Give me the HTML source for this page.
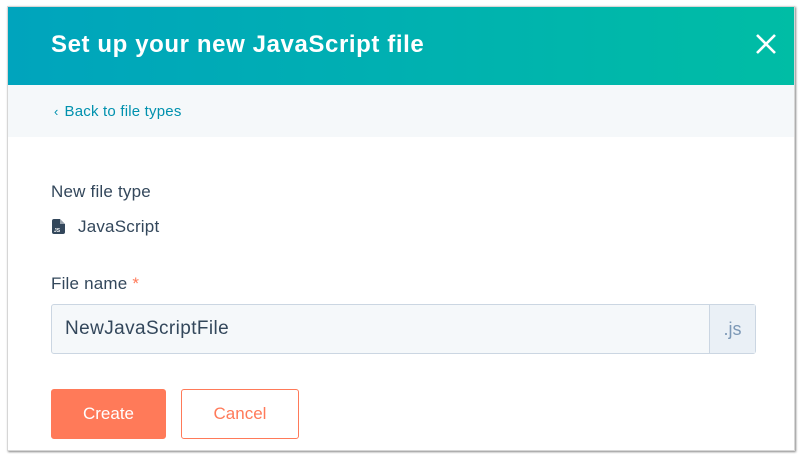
<!DOCTYPE html>
<html><head><style>
*{margin:0;padding:0;box-sizing:border-box}
body{width:802px;height:454px;background:#fff;font-family:"Liberation Sans",sans-serif;position:relative;overflow:hidden}
.modal{position:absolute;left:7px;top:6px;width:788px;height:445px;border:1px solid #d6d6d6;box-shadow:1px 1px 2px #888;background:#fff}
.hdr{position:absolute;left:8px;top:7px;width:786px;height:78px;background:linear-gradient(90deg,#00a4bd,#00bda5)}
.hdr h1{position:absolute;left:43px;top:24px;color:#fff;font-size:24px;font-weight:bold;letter-spacing:0.6px}
.back{position:absolute;left:8px;top:85px;width:786px;height:52px;background:#f5f8fa}
.back span{position:absolute;left:46px;top:18px;color:#0091ae;font-size:15px;letter-spacing:0.2px}
.t{position:absolute;color:#33475b;font-size:17px;letter-spacing:0.2px}
.inp{position:absolute;left:51px;top:304px;width:705px;height:50px;border:1px solid #cbd6e2;border-radius:3px;background:#f5f8fa}
.inp .v{position:absolute;left:13px;top:13px;font-size:19px;color:#33475b;letter-spacing:0.4px}
.add{position:absolute;right:0;top:0;width:46px;height:48px;border-left:1px solid #cbd6e2;background:#eaf0f6;color:#7c98b6;font-size:18px;text-align:center;line-height:48px}
.btn{position:absolute;top:389px;height:50px;border-radius:3px;font-size:17px;text-align:center;line-height:48px}
</style></head><body>
<div class="modal"></div>
<div class="hdr"><h1>Set up your new JavaScript file</h1>
<svg style="position:absolute;left:747px;top:26px" width="22" height="22" viewBox="0 0 22 22"><path d="M2 2L20 20M20 2L2 20" stroke="#fff" stroke-width="2.6"/></svg></div>
<div class="back"><span><span style="position:static;font-size:13px;margin-right:6px">&lsaquo;</span>Back to file types</span></div>
<div class="t" style="left:51px;top:182px">New file type</div>
<svg style="position:absolute;left:51px;top:219px" width="14" height="15" viewBox="0 0 14 15"><path d="M1 2Q1 0 3 0H9L14 5V13Q14 15 12 15H3Q1 15 1 13Z" fill="#33475b"/><path d="M9 0V5H14" fill="#fff" opacity=".5"/><text x="3" y="13" font-size="5" fill="#fff" font-family="Liberation Sans" font-weight="bold">JS</text></svg>
<div class="t" style="left:78px;top:217px">JavaScript</div>
<div class="t" style="left:51px;top:274px">File name <span style="color:#ff7a59">*</span></div>
<div class="inp"><span class="v">NewJavaScriptFile</span><div class="add">.js</div></div>
<div class="btn" style="left:51px;width:115px;background:#ff7a59;color:#fff;border:1px solid #ff7a59">Create</div>
<div class="btn" style="left:181px;width:118px;background:#fff;color:#ff7a59;border:1px solid #ff7a59">Cancel</div>
</body></html>
